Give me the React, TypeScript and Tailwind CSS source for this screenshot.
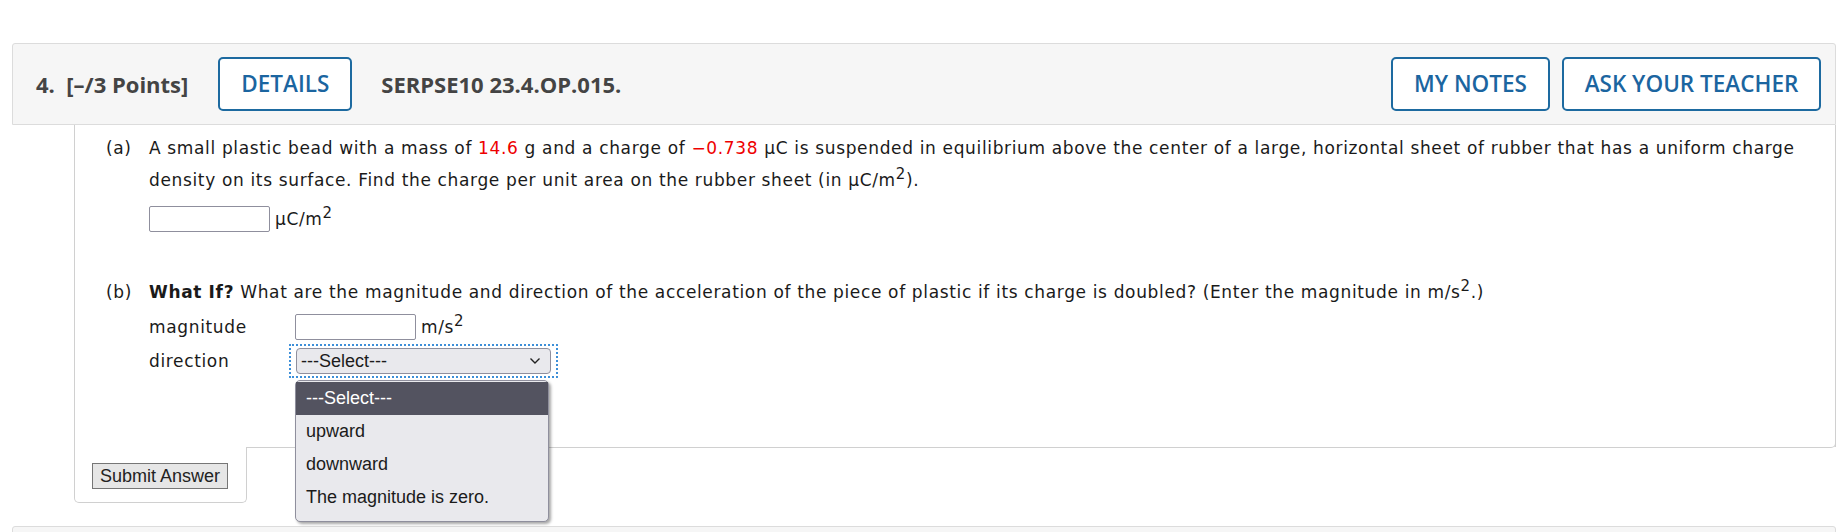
import React from 'react';

const blueBtn =
  "flex h-[54px] items-center justify-center rounded-[5px] border-2 border-[#1d6aa0] bg-white font-['Open_Sans',sans-serif] text-[22.5px] font-semibold text-[#1b65a0]";

function Chevron() {
  return (
    <svg width="12" height="8" viewBox="0 0 12 8" fill="none" className="shrink-0">
      <path d="M1.5 1.5 6 6l4.5-4.5" stroke="#222" strokeWidth="1.4" />
    </svg>
  );
}

export default function App() {
  return (
    <div className="h-[532px] overflow-hidden bg-white pt-[43px] font-['DejaVu_Sans',Verdana,sans-serif] text-[#1a1a1a]">
      <div className="ml-[12px] mr-[10px]">
        {/* question header */}
        <div className="flex h-[82px] items-center rounded-t-[3px] border border-[#dcdcdc] bg-[#f6f6f6] pl-[23px] pr-[14px]">
          <span className="font-['Open_Sans',sans-serif] text-[22px] font-bold text-[#444]">
            4.&nbsp; [–/3 Points]
          </span>
          <button type="button" className={`${blueBtn} ml-[30px] w-[134px]`}>
            DETAILS
          </button>
          <span className="ml-[29px] font-['Open_Sans',sans-serif] text-[22px] font-bold text-[#444]">
            SERPSE10 23.4.OP.015.
          </span>
          <div className="ml-auto flex gap-[12px]">
            <button type="button" className={`${blueBtn} w-[159px]`}>
              MY NOTES
            </button>
            <button type="button" className={`${blueBtn} w-[259px]`}>
              ASK YOUR TEACHER
            </button>
          </div>
        </div>

        <div className="ml-[62px]">
          <div className="border-l border-r border-[#d0d0d0] pb-[69px] pl-[31px] pt-[7px] text-[17px] leading-[32px] tracking-[0.65px]">
            {/* part a */}
            <div className="flex">
              <span className="w-[43px] shrink-0">(a)</span>
              <div className="pr-[30px]">
                <p>
                  A small plastic bead with a mass of <span className="text-[#ee0000]">14.6</span> g and a
                  charge of <span className="text-[#ee0000]">−0.738</span> μC is suspended in equilibrium above
                  the center of a large, horizontal sheet of rubber that has a uniform charge density on its
                  surface. Find the charge per unit area on the rubber sheet (in μC/m<sup className="text-[88%]">2</sup>).
                </p>
                <div className="mt-[7px] flex h-[32px] items-center">
                  <input className="h-[26px] w-[121px] rounded-[2px] border border-[#8f8f9d] bg-white" />
                  <span className="ml-[5px]">
                    μC/m<sup className="text-[88%]">2</sup>
                  </span>
                </div>
              </div>
            </div>

            {/* part b */}
            <div className="mt-[41px] flex">
              <span className="w-[43px] shrink-0">(b)</span>
              <div>
                <p>
                  <b>What If?</b> What are the magnitude and direction of the acceleration of the piece of
                  plastic if its charge is doubled? (Enter the magnitude in m/s<sup className="text-[88%]">2</sup>.)
                </p>
                <div className="mt-[2px] flex h-[34px] items-center">
                  <span className="w-[146px]">magnitude</span>
                  <input className="h-[26px] w-[121px] rounded-[2px] border border-[#8f8f9d] bg-white" />
                  <span className="ml-[5px]">
                    m/s<sup className="text-[88%]">2</sup>
                  </span>
                </div>
                <div className="flex h-[34px] items-center">
                  <span className="w-[146px]">direction</span>
                  <div className="relative">
                    <div className="-m-[6px] rounded-[1px] px-[7px] py-[4px] outline-2 outline-offset-[-2px] outline-dotted outline-[#3d8fd8]">
                      <div className="flex h-[26px] w-[255px] items-center justify-between rounded-[4px] border border-[#8f8f9d] bg-[#e9e9ed] pl-[4px] pr-[9px] font-['Liberation_Sans',Arial,sans-serif] text-[18px] leading-none tracking-normal text-[#1b1b1b]">
                        <span>---Select---</span>
                        <Chevron />
                      </div>
                    </div>
                    {/* open native list */}
                    <ul className="absolute left-0 top-[30px] z-10 w-[254px] rounded-[5px] border border-[#8f8f9d] bg-[#e9e9ed] pb-[7px] pt-[1px] font-['Liberation_Sans',Arial,sans-serif] text-[18px] leading-[33px] tracking-normal text-[#1b1b1b] shadow-[2px_2px_3px_rgba(0,0,0,0.35)]">
                      <li className="bg-[#535360] pl-[10px] text-white">---Select---</li>
                      <li className="pl-[10px]">upward</li>
                      <li className="pl-[10px]">downward</li>
                      <li className="pl-[10px]">The magnitude is zero.</li>
                    </ul>
                  </div>
                </div>
              </div>
            </div>
          </div>

          {/* submit tab */}
          <div className="flex">
            <div className="flex h-[56px] w-[173px] items-start rounded-b-[5px] border-b border-l border-r border-[#d0d0d0] pl-[17px] pt-[16px]">
              <button
                type="button"
                className="h-[26px] border border-[#767676] bg-[#e6e6e6] px-[7px] font-['Liberation_Sans',Arial,sans-serif] text-[18px] leading-none text-[#222]"
              >
                Submit Answer
              </button>
            </div>
            <div className="-mt-[6px] h-[7px] flex-1 rounded-br-[5px] border-b border-r border-[#d0d0d0]" />
          </div>
        </div>

        {/* next question header (cut off) */}
        <div className="mt-[23px] h-[40px] rounded-t-[3px] border border-[#dcdcdc] bg-[#f6f6f6]" />
      </div>
    </div>
  );
}
